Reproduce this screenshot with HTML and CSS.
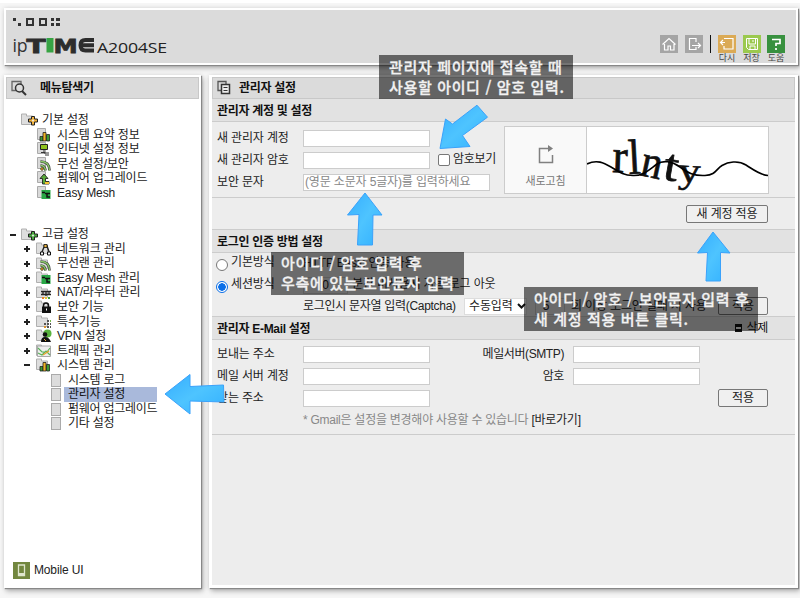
FILE: index.html
```
<!DOCTYPE html>
<html lang="ko">
<head>
<meta charset="utf-8">
<title>ipTIME A2004SE</title>
<link rel="stylesheet" href="styles.css">
</head>
<body>
<svg width="0" height="0" class="defs">
  <symbol id="page" viewBox="0 0 16 14"><path d="M1.500.5h8v11h-8z" fill="#d9d9d9" stroke="#aaa"/></symbol>
  <symbol id="folder" viewBox="0 0 16 14"><path d="M.5 11.500V1h5v2h6v8.500z" fill="#dedede" stroke="#b0b0b0"/></symbol>
  <symbol id="bars" viewBox="0 0 16 14"><path d="M4 13V8.500h3V13z" fill="#3b9b33" stroke="#222" stroke-width=".8"/><path d="M7 13V4.500h3V13z" fill="#f0b323" stroke="#222" stroke-width=".8"/><path d="M10.500 13V6.500h3V13z" fill="#3b9b33" stroke="#222" stroke-width=".8"/></symbol>
  <symbol id="pc" viewBox="0 0 16 14"><path d="M4.500 2.500h7v5h-7z" fill="#8fc31f" stroke="#222"/><path d="M8 8v3h5M5 10.500h4M9 13h4" stroke="#333" fill="none"/></symbol>
  <symbol id="wifi" viewBox="0 0 16 14"><path d="M4.500 4.500q9 0 9 9M4.500 8.500q4.500 0 5 5" stroke="#333" stroke-width="2.600" fill="none"/><path d="M4.500 4.500q9 0 9 9M4.500 8.500q4.500 0 5 5" stroke="#8bc96a" stroke-width="1.400" fill="none"/><circle cx="6" cy="12" r="1.400" fill="#e8a320" stroke="#222" stroke-width=".6"/></symbol>
  <symbol id="up" viewBox="0 0 16 14"><path d="M8 3l4 4.500h-2.500v3H13V13H6.500V7.500H4z" fill="#58aa38" stroke="#222" stroke-width=".9"/><path d="M9 11h4v2H9z" fill="#f2c22e"/></symbol>
  <symbol id="mesh" viewBox="0 0 16 14"><path d="M5.500 4h9v9h-9z" fill="#28a745"/><path d="M6 6.500h3M9 7.500h2v3.500h3M11 7.500h3" stroke="#111" stroke-width="1.500" fill="none"/></symbol>
  <symbol id="net" viewBox="0 0 16 14"><path d="M8.500 4l-3 7M11 4l2.500 7M7.500 3.500h4" stroke="#222" fill="none" stroke-width="1.400"/><path d="M8 2.500h3v3H8z" fill="#e9b23e" stroke="#111" stroke-width=".8"/><path d="M4.500 10h3v3h-3zM11.500 10h3v3h-3z" fill="#f5f5f5" stroke="#111"/></symbol>
  <symbol id="nat" viewBox="0 0 16 14"><path d="M5 5.500h10M5 8.500h10M10 5v5M7 5v4M13 5v4" stroke="#222" stroke-width="1.300"/><path d="M6 11h2v2H6z" fill="#e8832b"/><path d="M9 11h2v2H9z" fill="#e3c52d"/><path d="M12 11h2v2h-2z" fill="#459e3b"/></symbol>
  <symbol id="lock" viewBox="0 0 16 14"><path d="M7.500 7V5.500q0-2.500 2.500-2.500t2.500 2.500V7" fill="none" stroke="#111" stroke-width="1.500"/><path d="M6 6.500h9V13H6z" fill="#111"/><path d="M10.500 8.500v2" stroke="#fff"/></symbol>
  <symbol id="dots" viewBox="0 0 16 14"><path d="M8 12h7M8 9h7M11 6h4" stroke="#555" stroke-width="2" stroke-dasharray="2 1"/><path d="M8 11h2v2H8z" fill="#d9912b"/><path d="M14 5h1v2h-1z" fill="#74b647"/></symbol>
  <symbol id="vpn" viewBox="0 0 16 14"><circle cx="11.500" cy="4.500" r="4" fill="#58b23d"/><circle cx="9" cy="5.500" r="2.300" fill="#111"/><path d="M5 13q0-5 4-5t6 5z" fill="#111"/><path d="M8 10l2 2" stroke="#e9b23e"/></symbol>
  <symbol id="chart" viewBox="0 0 16 14"><path d="M1.500 2h13v10.500h-13z" stroke="#aaa" fill="#eee"/><path d="M2 9l4 2 4-4 4 4M2 4l4 4 5 0 3-4" stroke="#5bb35b" fill="none" stroke-width="1.200"/><path d="M7 11l3-2 3-2" stroke="#e9a32e" stroke-width="1.300" fill="none"/></symbol>
  <symbol id="gear" viewBox="0 0 18 14"><path d="M10.500 3.500h3v2.500h3v3h-3v3h-3V9h-3V6h3z" fill="currentColor" stroke="#222"/><circle cx="12" cy="7.500" r="1" fill="#eee"/></symbol>
</svg>

<header class="top panel">
  <svg class="logo" width="170" height="54" viewBox="0 0 170 54">
    <g fill="#333"><path d="M8 9h3v3H8zM13 14h3v3h-3zM46 9h3v3h-3zM51 9h4v3h-4zM46 14h3v3h-3zM51 14h4v3h-4z"/></g>
    <path d="M22 10h6v6h-6zM35 10h6v6h-6z" fill="none" stroke="#333" stroke-width="2"/>
    <text x="7.500" y="43" class="ip" textLength="15" lengthAdjust="spacingAndGlyphs">ip</text>
    <text x="21.500" y="43.500" class="time" textLength="19" lengthAdjust="spacingAndGlyphs">T</text>
    <path d="M41.500 29h7v14.500h-7z" fill="#37a343"/><text x="41" y="43" class="time green">I</text>
    <text x="48.500" y="43.500" class="time" textLength="24" lengthAdjust="spacingAndGlyphs">M</text>
    <path d="M89 31h-8.500q-5 0-5 5.200t5 5.200h8.500M77 36.200h12" fill="none" stroke="#2d2d2d" stroke-width="4"/>
    <text x="92" y="43.500" class="model" textLength="70" lengthAdjust="spacingAndGlyphs">A2004SE</text>
  </svg>
  <nav class="tools">
    <svg width="18" height="18"><path d="M0 0h18v18H0z" fill="#a5a5a5"/><path d="M2.500 9.500L9 3.500l6.500 6M4.500 9v6H8v-4h2.500v4H14V9" fill="none" stroke="#fff" stroke-width="1.200"/></svg>
    <svg width="18" height="18"><path d="M0 0h18v18H0z" fill="#a5a5a5"/><path d="M11 7V3.500H4.500v11H11V12M7 10.500h8M13 8l2.500 2.500L13 13" fill="none" stroke="#fff" stroke-width="1.200"/></svg>
    <i class="bar"></i>
    <div class="tool"><svg width="18" height="18"><path d="M0 0h18v18H0z" fill="#dbaa55"/><path d="M6 3.500h9v10.500H6V11M2.500 7.500H7M5 5L2.500 7.500 5 10" fill="none" stroke="#fff" stroke-width="1.200"/></svg><span>다시</span></div>
    <div class="tool"><svg width="18" height="18"><path d="M0 0h18v18H0z" fill="#9bc94e"/><path d="M3.500 3.500h11v11h-9l-2-2zM6 4v5h6.500V4M7 14v-3h5v3M10 5v2" fill="none" stroke="#fff"/></svg><span>저장</span></div>
    <div class="tool"><svg width="18" height="18"><path d="M0 0h18v18H0z" fill="#38913f"/><path d="M5 4.500h8v4H9V11M9 13v2" fill="none" stroke="#fff" stroke-width="1.700"/></svg><span>도움</span></div>
  </nav>
</header>

<div class="cols">
  <aside class="side panel">
    <h2 class="title"><svg width="16" height="16"><path d="M1 1.500h9v9H1z" fill="none" stroke="#666" stroke-width="1.300"/><circle cx="8.500" cy="8" r="4" fill="#ddd" stroke="#333" stroke-width="1.500"/><path d="M11 11l4 4" stroke="#333" stroke-width="2"/></svg>메뉴탐색기</h2>
    <ul class="tree">
      <li class="l1"><b></b><svg class="wide orange"><use href="#folder" width="16" height="14"/><use href="#gear" width="18" height="14"/></svg>기본 설정</li>
      <li class="l2"><b></b><svg><use href="#page"/><use href="#bars"/></svg>시스템 요약 정보</li>
      <li class="l2"><b></b><svg><use href="#page"/><use href="#pc"/></svg>인터넷 설정 정보</li>
      <li class="l2"><b></b><svg><use href="#page"/><use href="#wifi"/></svg>무선 설정/보안</li>
      <li class="l2"><b></b><svg><use href="#page"/><use href="#up"/></svg>펌웨어 업그레이드</li>
      <li class="l2"><b></b><svg><use href="#page"/><use href="#mesh"/></svg>Easy Mesh</li>
    </ul>
    <ul class="tree second">
      <li class="l1"><b class="minus"></b><svg class="wide leaf"><use href="#folder" width="16" height="14"/><use href="#gear" width="18" height="14"/></svg>고급 설정</li>
      <li class="l2"><b class="plus"></b><svg><use href="#folder"/><use href="#net"/></svg>네트워크 관리</li>
      <li class="l2"><b class="plus"></b><svg><use href="#folder"/><use href="#wifi"/></svg>무선랜 관리</li>
      <li class="l2"><b class="plus"></b><svg><use href="#folder"/><use href="#mesh"/></svg>Easy Mesh 관리</li>
      <li class="l2"><b class="plus"></b><svg><use href="#folder"/><use href="#nat"/></svg>NAT/라우터 관리</li>
      <li class="l2"><b class="plus"></b><svg><use href="#folder"/><use href="#lock"/></svg>보안 기능</li>
      <li class="l2"><b class="plus"></b><svg><use href="#folder"/><use href="#dots"/></svg>특수기능</li>
      <li class="l2"><b class="plus"></b><svg><use href="#folder"/><use href="#vpn"/></svg>VPN 설정</li>
      <li class="l2"><b class="plus"></b><svg><use href="#folder"/><use href="#chart"/></svg>트래픽 관리</li>
      <li class="l2"><b class="minus"></b><svg><use href="#folder"/><use href="#bars"/></svg>시스템 관리</li>
      <li class="l3"><i class="doc"></i><span>시스템 로그</span></li>
      <li class="l3"><i class="doc"></i><span class="on">관리자 설정</span></li>
      <li class="l3"><i class="doc"></i><span>펌웨어 업그레이드</span></li>
      <li class="l3"><i class="doc"></i><span>기타 설정</span></li>
    </ul>
    <div class="mobile"><svg width="17" height="17"><path d="M0 0h17v17H0z" fill="#72873f"/><path d="M5.500 3h6v10.500h-6z" fill="none" stroke="#dfe6cd" stroke-width="1.300"/><path d="M6 11h5v2H6z" fill="#dfe6cd"/></svg>Mobile UI</div>
  </aside>

  <main class="main panel">
    <h2 class="title"><svg width="16" height="16"><path d="M1 1.500h8v9H1z" fill="#ddd" stroke="#555" stroke-width="1.300"/><path d="M4.500 4.500h8v9h-8z" fill="#eee" stroke="#333" stroke-width="1.500"/><path d="M6.500 7.500h4M6.500 10.500h4" stroke="#333"/></svg>관리자 설정</h2>
    <h3>관리자 계정 및 설정</h3>
    <section class="account">
      <div class="fields">
        <div class="row"><label>새 관리자 계정</label><input></div>
        <div class="row"><label>새 관리자 암호</label><input><i class="check"></i><span class="show">암호보기</span></div>
        <div class="row"><label>보안 문자</label><input class="long" placeholder="(영문 소문자 5글자)를 입력하세요"></div>
      </div>
      <div class="captcha">
        <div class="refresh"><svg width="18" height="20"><path d="M9 3.500H2.500v14h13V10M8 3.500h6" fill="none" stroke="#808080" stroke-width="1.500"/><path d="M11 0l5 3.500-5 3.500z" fill="#808080"/></svg>새로고침</div>
        <svg class="word" width="181" height="65" viewBox="587 127 181 65">
          <text transform="translate(612 172) rotate(2) scale(1.200 1.250)" font-size="38">r</text>
          <text transform="translate(629 174) rotate(-3) scale(1 1.120)" font-size="44">l</text>
          <text transform="translate(639 175) rotate(12) scale(1.050 1.150)" font-size="40">n</text>
          <text transform="translate(662 179) rotate(10) scale(1.350 1.200)" font-size="38">t</text>
          <text transform="translate(678 182) rotate(3) scale(1.150 .95)" font-size="38">y</text>
          <path d="M587 164C597 159 604 163 611 167S622 175 633 175.500S651 168 657 164S672 161 680 167S694 176 705 175.500S716 169 722 165.500S738 160 746 165S760 175 768 175.500" fill="none" stroke="#000" stroke-width="1.600"/>
        </svg>
      </div>
    </section>
    <div class="actions"><button class="wide">새 계정 적용</button></div>
    <h3>로그인 인증 방법 설정</h3>
    <section class="auth">
      <div class="row"><i class="radio"></i><label>기본방식</label><span>HTTP Basic 인증 사용</span></div>
      <div class="row"><i class="radio sel"></i><label>세션방식</label><span class="num n1">0</span><span class="after">분간 미사용시 자동 로그 아웃</span></div>
      <div class="row login"><span class="lead">로그인시 문자열 입력(Captcha)</span><span class="select">수동입력<svg width="9" height="6"><path d="M1 1l3.500 3.500L8 1" fill="none" stroke="#111" stroke-width="2"/></svg></span><span class="num n2">5</span><span class="times">회 이상 로그인 실패 시 사용</span><button>적용</button></div>
    </section>
    <h3 class="split">관리자 E-Mail 설정<span class="del"><i></i>삭제</span></h3>
    <section class="mail">
      <div class="row"><label>보내는 주소</label><input><label class="right">메일서버(SMTP)</label><input></div>
      <div class="row"><label>메일 서버 계정</label><input><label class="right">암호</label><input></div>
      <div class="row"><label>받는 주소</label><input><button>적용</button></div>
      <p>* Gmail은 설정을 변경해야 사용할 수 있습니다 <a>[바로가기]</a></p>
    </section>
  </main>
</div>

<div class="tip tip-a">관리자 페이지에 접속할 때<br>사용할 아이디 / 암호 입력.</div>
<div class="tip tip-b">아이디 / 암호 입력 후<br>우측에 있는 보안문자 입력</div>
<div class="tip tip-c">아이디 / 암호 / 보안문자 입력 후<br>새 계정 적용 버튼 클릭.</div>
<svg class="arrows" width="800" height="598">
  <defs><linearGradient id="sky" x1="0" y1="0" x2="1" y2="1"><stop offset="0" stop-color="#35adff"/><stop offset=".5" stop-color="#4ec4ff"/><stop offset="1" stop-color="#32b0ff"/></linearGradient></defs>
  <g fill="url(#sky)" stroke="#3aa2fb" stroke-width="1" stroke-linejoin="round">
    <path d="M440 148.500L445.500 119l7 5L477 105.200l10.500 12L462.500 135.500l7.500 11z"/>
    <path d="M365 193l17 22h-9l-.5 30H357.500l1.500-30.500-11.500.5z"/>
    <path d="M713 232l17 21-9.500-.5V281H706l1.500-28.500-10 .5z"/>
    <path d="M165 394l25-19.500v12L223.500 385l.5 17-34-1v13z"/>
  </g>
</svg>
</body>
</html>
```

FILE: styles.css
```
* { box-sizing: border-box; }
body {
  margin: 0; height: 598px; overflow: hidden; position: relative;
  padding: 5px 1px 0 4px; border-top: 3px solid #fff;
  background: linear-gradient(#e4e4e4 0 1px, #f6f6f6 1px);
  font: 12px/14.55px "Liberation Sans", "Noto Sans CJK KR", sans-serif; color: #222;
  letter-spacing: -.15px;
}
.defs { position: absolute; }
ul, h2, h3, p { margin: 0; padding: 0; list-style: none; }
.panel { border: 2px solid #fff; box-shadow: 1px 1px 1px #888, 2px 3px 5px #aaa, 0 0 4px #ddd; }

.top { height: 57px; width: 794px; background: #dbdbdb; display: flex; justify-content: space-between; }
.logo { margin: -1px 0 0 -1px; }
.ip { font: 18px "Open Sans", sans-serif; fill: #333; }
.time { font: bold 20px "DejaVu Sans", sans-serif; fill: #2d2d2d; stroke: #2d2d2d; stroke-width: .8px; }
.time.green { fill: #37a343; stroke: none; font-size: 16px; }
.model { font: 14.5px "Open Sans", sans-serif; fill: #222; }
.tools { display: flex; padding: 25px 11px 0 0; font-size: 9px; line-height: 10px; color: #444; }
.tools > svg { margin-right: 7px; }
.tools .bar { width: 1px; height: 18px; background: #111; margin: 0 7px 0 0; }
.tool { width: 18px; margin-right: 6.500px; display: flex; flex-direction: column; align-items: center; white-space: nowrap; }
.tool:last-child { margin-right: 0; }
.tool span { margin-top: 0; }

.cols { display: flex; gap: 8px; margin-top: 10px; height: 513px; }
.side { width: 197px; background: #fff; display: flex; flex-direction: column; }
.main { width: 589px; background: #ededed; border-width: 2px 3px 3px; }
.title { height: 22px; border: 1px solid #c8c8c8; background: #dbdbdb; display: flex; align-items: center; font-size: 12px; color: #111; padding-left: 4px; letter-spacing: -.3px; }
.title svg { margin-right: 13px; }
.main .title svg { margin-right: 6px; }

.tree { margin-top: 14px; }
.tree.second { margin-top: 27px; }
.tree li { height: 14.550px; display: flex; align-items: center; white-space: nowrap; }
.tree svg { width: 16px; height: 14px; flex: none; margin-right: 5px; }
.tree svg.wide { width: 18px; margin-right: 3px; }
.orange { color: #f0b13c; }
.leaf { color: #4aa93f; }
.tree b { width: 7px; height: 7px; flex: none; }
.minus { background: linear-gradient(#222, #222) 50% 50% / 6px 2px no-repeat; }
.plus { background: linear-gradient(#222, #222) 50% 50% / 6px 2px no-repeat, linear-gradient(#222, #222) 50% 50% / 2px 6px no-repeat; }
.l1 { padding-left: 3px; }
.l1 b { margin-right: 5px; }
.l2 { padding-left: 17px; }
.l2 b { margin-right: 6px; }
.l3 { padding-left: 45px; }
.doc { width: 10px; height: 13px; border: 1px solid #aaa; background: #dcdcdc; margin-right: 3px; }
.l3 span { padding: 0 0 0 4px; width: 93px; letter-spacing: -.25px; }
.l3 .on { background: #a9b9db; color: #111; }
.mobile { margin: auto 0 7px 7px; display: flex; align-items: center; gap: 4px; }

h3 { height: 23px; background: #e2e2e2; border-bottom: 1px solid #ccc; font: bold 12px/24px "Liberation Sans", "Noto Sans CJK KR", sans-serif; padding-left: 5px; color: #111; letter-spacing: -.3px; }
.row { height: 22px; display: flex; align-items: center; white-space: nowrap; }
.row label { width: 86px; margin-left: 5px; padding-top: 1px; }
input { width: 127px; height: 17px; border: 1px solid #ccc; background: #fff; padding: 0 1px; font: inherit; letter-spacing: -.15px; outline: 0; border-radius: 0; margin: 0; }
input.long { width: 187px; }
input::placeholder { color: #888; opacity: 1; }
.check { width: 12px; height: 12px; border: 1px solid #777; border-radius: 2px; background: #fff; margin: 0 3px 0 8px; }
.show { margin-top: -2px; letter-spacing: -.3px; }
.account { height: 76px; border-bottom: 1px solid #ccc; display: flex; padding-top: 4px; }
.fields { width: 292px; padding-top: 1px; }
.captcha { width: 265px; height: 68px; border: 1px solid #ccc; background: #fff; display: flex; }
.refresh { width: 82px; flex: none; background: #f9f9f9; border-right: 1px solid #ccc; display: flex; flex-direction: column; align-items: center; gap: 9px; padding-top: 18px; color: #777; font-size: 11px; }
.word { flex: none; }
.word text { font-family: "Liberation Serif", serif; fill: #111; stroke: #111; stroke-width: .6px; }
.actions { height: 32px; border-bottom: 1px solid #ccc; display: flex; align-items: center; justify-content: flex-end; padding-right: 27px; }
button { width: 50px; height: 18px; border: 1px solid #777; border-radius: 2px; background: #f0f0f0; font: inherit; letter-spacing: inherit; color: #222; padding: 1px 0 0; }
button.wide { width: 82px; }

.auth { height: 64px; border-bottom: 1px solid #ccc; }
.auth .row { height: 21.500px; }
.radio { width: 12px; height: 12px; border: 1px solid #777; border-radius: 50%; background: #fff; margin: 3px 2px 0 4px; }
.radio.sel { border: 1px solid #0b6fe8; background: radial-gradient(#0b6fe8 0 3.500px, #fff 4px); }
.auth .row label { width: 72px; margin: -3px 0 0 1px; }
.num { width: 45px; height: 17px; border: 1px solid #ccc; text-align: center; line-height: 15px; background: #eee; }
.after { margin: -2px 0 0 4px; }
.auth .login { padding-left: 91px; height: 20px; }
.lead { width: 161px; letter-spacing: -.3px; }
.select { width: 63px; height: 17px; border: 1px solid #ddd; background: #fff; padding-left: 4px; display: flex; align-items: center; gap: 4px; line-height: 15px; }
.n2 { width: 30px; padding-right: 8px; margin: 0 6px 0 8px; }
.times { width: 147px; }
.split { display: flex; justify-content: space-between; padding-right: 27px; }
.del { font-weight: normal; display: flex; align-items: center; gap: 5px; }
.del i { width: 7px; height: 8px; border: solid #111; border-width: 3px 1px; background: #fff; }
.mail { height: 95px; border-bottom: 1px solid #ccc; padding-top: 3px; }
.mail .row .right { width: 134px; margin: 0 9px 0 0; text-align: right; letter-spacing: -.4px; }
.mail button { margin-left: 288px; }
.mail p { padding: 4px 0 0 91px; color: #888; letter-spacing: -.26px; }
.mail a { color: #222; }

.tip { position: absolute; background: rgba(0,0,0,.55); color: #f2f2f2; font: 500 15px/20px "Noto Sans CJK KR", sans-serif; letter-spacing: .65px; -webkit-text-stroke: .3px #f2f2f2; white-space: nowrap; padding: 2px 0 0 10px; }
.tip-a { left: 379px; top: 52px; width: 194px; height: 44px; }
.tip-b { left: 271px; top: 249px; width: 193px; height: 43px; padding-top: 1px; }
.tip-c { left: 524px; top: 284px; width: 234px; height: 44px; }
.arrows { position: absolute; left: 0; top: -3px; pointer-events: none; }
```
